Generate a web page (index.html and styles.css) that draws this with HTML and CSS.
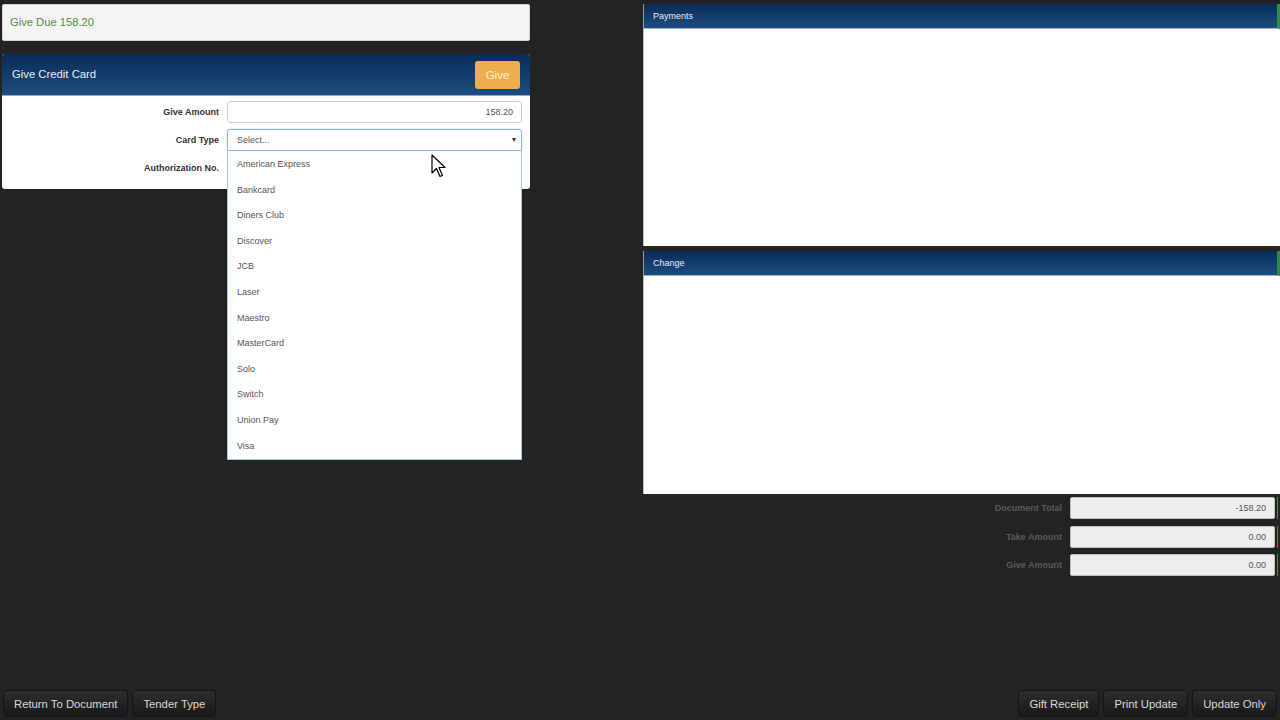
FILE: index.html
```html
<!DOCTYPE html>
<html lang="en">
<head>
  <meta charset="UTF-8">
  <title>Tender - Give Credit Card</title>
  <link rel="stylesheet" href="styles.css">
</head>
<body>
  <div class="screen">
    <div class="main">
      <div class="left-col">
        <div class="due-box">Give Due 158.20</div>

        <div class="panel card-panel">
          <div class="panel-head big">
            <span>Give Credit Card</span>
            <button class="btn-give">Give</button>
          </div>
          <div class="panel-body form">
            <div class="form-row">
              <label>Give Amount</label>
              <div class="field num">158.20</div>
            </div>
            <div class="form-row">
              <label>Card Type</label>
              <div class="select-wrap">
                <div class="field select">Select...<span class="caret">&#9662;</span></div>
                <ul class="options">
                  <li>American Express</li>
                  <li>Bankcard</li>
                  <li>Diners Club</li>
                  <li>Discover</li>
                  <li>JCB</li>
                  <li>Laser</li>
                  <li>Maestro</li>
                  <li>MasterCard</li>
                  <li>Solo</li>
                  <li>Switch</li>
                  <li>Union Pay</li>
                  <li>Visa</li>
                </ul>
              </div>
            </div>
            <div class="form-row">
              <label>Authorization No.</label>
              <div class="field"></div>
            </div>
          </div>
        </div>
      </div>

      <div class="right-col">
        <div class="panel list-panel payments">
          <div class="panel-head small">Payments</div>
          <div class="panel-body"></div>
        </div>
        <div class="panel list-panel change">
          <div class="panel-head small">Change</div>
          <div class="panel-body"></div>
        </div>

        <div class="totals">
          <div class="total-row">
            <label>Document Total</label>
            <div class="total-field">-158.20</div>
            <span class="mark"></span>
          </div>
          <div class="total-row">
            <label>Take Amount</label>
            <div class="total-field">0.00</div>
            <span class="mark"></span>
          </div>
          <div class="total-row">
            <label>Give Amount</label>
            <div class="total-field">0.00</div>
            <span class="mark"></span>
          </div>
        </div>
      </div>
    </div>

    <div class="footer">
      <div class="btn-group">
        <button class="btn-dark">Return To Document</button>
        <button class="btn-dark">Tender Type</button>
      </div>
      <div class="btn-group">
        <button class="btn-dark">Gift Receipt</button>
        <button class="btn-dark">Print Update</button>
        <button class="btn-dark">Update Only</button>
      </div>
    </div>

    <!-- mouse pointer -->
    <svg class="pointer" width="16" height="26" viewBox="0 0 16 26">
      <path d="M1 1 L1 19 L5.5 14.5 L9 22.5 L11.5 21.5 L8 13.5 L14 13.5 Z" fill="#fff" stroke="#000" stroke-width="1.2" stroke-linejoin="round"/>
    </svg>
  </div>
</body>
</html>
```

FILE: styles.css
```css
body {
  margin: 0;
  background: #232323;
  font-family: "Liberation Sans", Arial, sans-serif;
  overflow: hidden;
}
.screen {
  position: relative;
  width: 1280px;
  height: 720px;
  display: flex;
  flex-direction: column;
}
.main {
  flex: 1;
  display: flex;
  padding-top: 4px;
}
.left-col {
  width: 528px;
  margin-left: 2px;
}
.right-col {
  margin-left: 113px;
  width: 637px;
}

/* due box */
.due-box {
  height: 37px;
  box-sizing: border-box;
  background: #f4f4f4;
  border: 1px solid #d4d4d4;
  border-radius: 2px;
  color: #4f8f3f;
  font-size: 11.2px;
  line-height: 35px;
  padding-left: 7px;
  margin-bottom: 13px;
}

/* panels */
.panel {
  background: #fff;
  border-radius: 3px;
}
.panel-head {
  background: linear-gradient(to bottom, #0a2b55, #1e4d80);
  color: #e6edf5;
  display: flex;
  align-items: center;
  box-sizing: border-box;
}
.panel-head.big {
  height: 42px;
  font-size: 11.3px;
  padding: 0 10px 2px 10px;
  justify-content: space-between;
  border-radius: 3px 3px 0 0;
  border-bottom: 1px solid #8fa6c2;
}
.panel-head.small {
  height: 25px;
  font-size: 9px;
  padding-left: 9px;
  border-left: 1px solid #8a9cb0;
  border-right: 3px solid #2e8b4a;
  border-bottom: 1px solid #9fb4cc;
}
.btn-give {
  background: #f0ad4e;
  border: none;
  border-radius: 3px;
  color: #fbeedd;
  font-family: inherit;
  font-size: 11.5px;
  width: 45px;
  height: 28px;
  padding: 0;
  margin-top: 3px;
}

/* form */
.panel-body.form {
  padding: 5px 8px 10px 0;
}
.form-row {
  display: flex;
  align-items: center;
  margin-bottom: 6px;
}
.form-row:last-child {
  margin-bottom: 0;
}
.form-row label {
  width: 217px;
  text-align: right;
  font-size: 9px;
  font-weight: bold;
  color: #333;
  padding-right: 8px;
}
.field {
  flex: 1;
  height: 22px;
  box-sizing: border-box;
  border: 1px solid #ccc;
  border-radius: 3px;
  font-size: 9px;
  color: #555;
  line-height: 20px;
  padding: 0 8px;
}
.field.num {
  text-align: right;
}
.select-wrap {
  flex: 1;
  position: relative;
}
.field.select {
  border-color: #8cb8e4;
  border-radius: 3px 3px 0 0;
  box-shadow: 0 0 2px rgba(102, 175, 233, 0.5);
  padding-left: 9px;
  display: flex;
  justify-content: space-between;
}
.caret {
  font-size: 8px;
  color: #333;
  margin-right: -3px;
}
.options {
  position: absolute;
  left: 0;
  right: 0;
  top: 22px;
  margin: 0;
  padding: 1px 0 0 0;
  list-style: none;
  background: #fff;
  border: 1px solid #a9c4e0;
  border-top: none;
  z-index: 2;
}
.options li {
  height: 25.6px;
  line-height: 25.6px;
  font-size: 9px;
  color: #555;
  padding-left: 9px;
}

/* right side panels */
.list-panel {
  border-radius: 3px 0 0 0;
}
.list-panel .panel-body {
  border-left: 1px solid #bbb;
}
.payments .panel-body {
  height: 217px;
}
.payments {
  margin-bottom: 5px;
}
.change .panel-body {
  height: 218px;
}

/* totals */
.totals {
  padding-top: 3px;
}
.total-row {
  display: flex;
  align-items: center;
  height: 22px;
  margin-bottom: 6.5px;
}
.total-row label {
  width: 419px;
  text-align: right;
  font-size: 9px;
  font-weight: bold;
  color: #5a5a5a;
  padding-right: 8px;
}
.total-field {
  width: 205px;
  height: 22px;
  box-sizing: border-box;
  background: #ededed;
  border: 1px solid #bdbdbd;
  border-radius: 2px;
  font-size: 9px;
  color: #555;
  line-height: 20px;
  text-align: right;
  padding-right: 8px;
}
.mark {
  width: 1px;
  height: 22px;
  background: #d04848;
  margin-left: 2px;
}

/* footer */
.footer {
  display: flex;
  justify-content: space-between;
  padding: 0 3px 3px 3px;
}
.btn-group {
  display: flex;
  gap: 4px;
}
.btn-dark {
  height: 27px;
  padding: 0 10px;
  background: linear-gradient(to bottom, #2e2e2e, #181818);
  border: 1px solid #151515;
  border-radius: 4px;
  color: #d8d8d8;
  font-family: inherit;
  font-size: 11.3px;
}

.pointer {
  position: absolute;
  left: 431px;
  top: 154px;
  z-index: 5;
}
```
